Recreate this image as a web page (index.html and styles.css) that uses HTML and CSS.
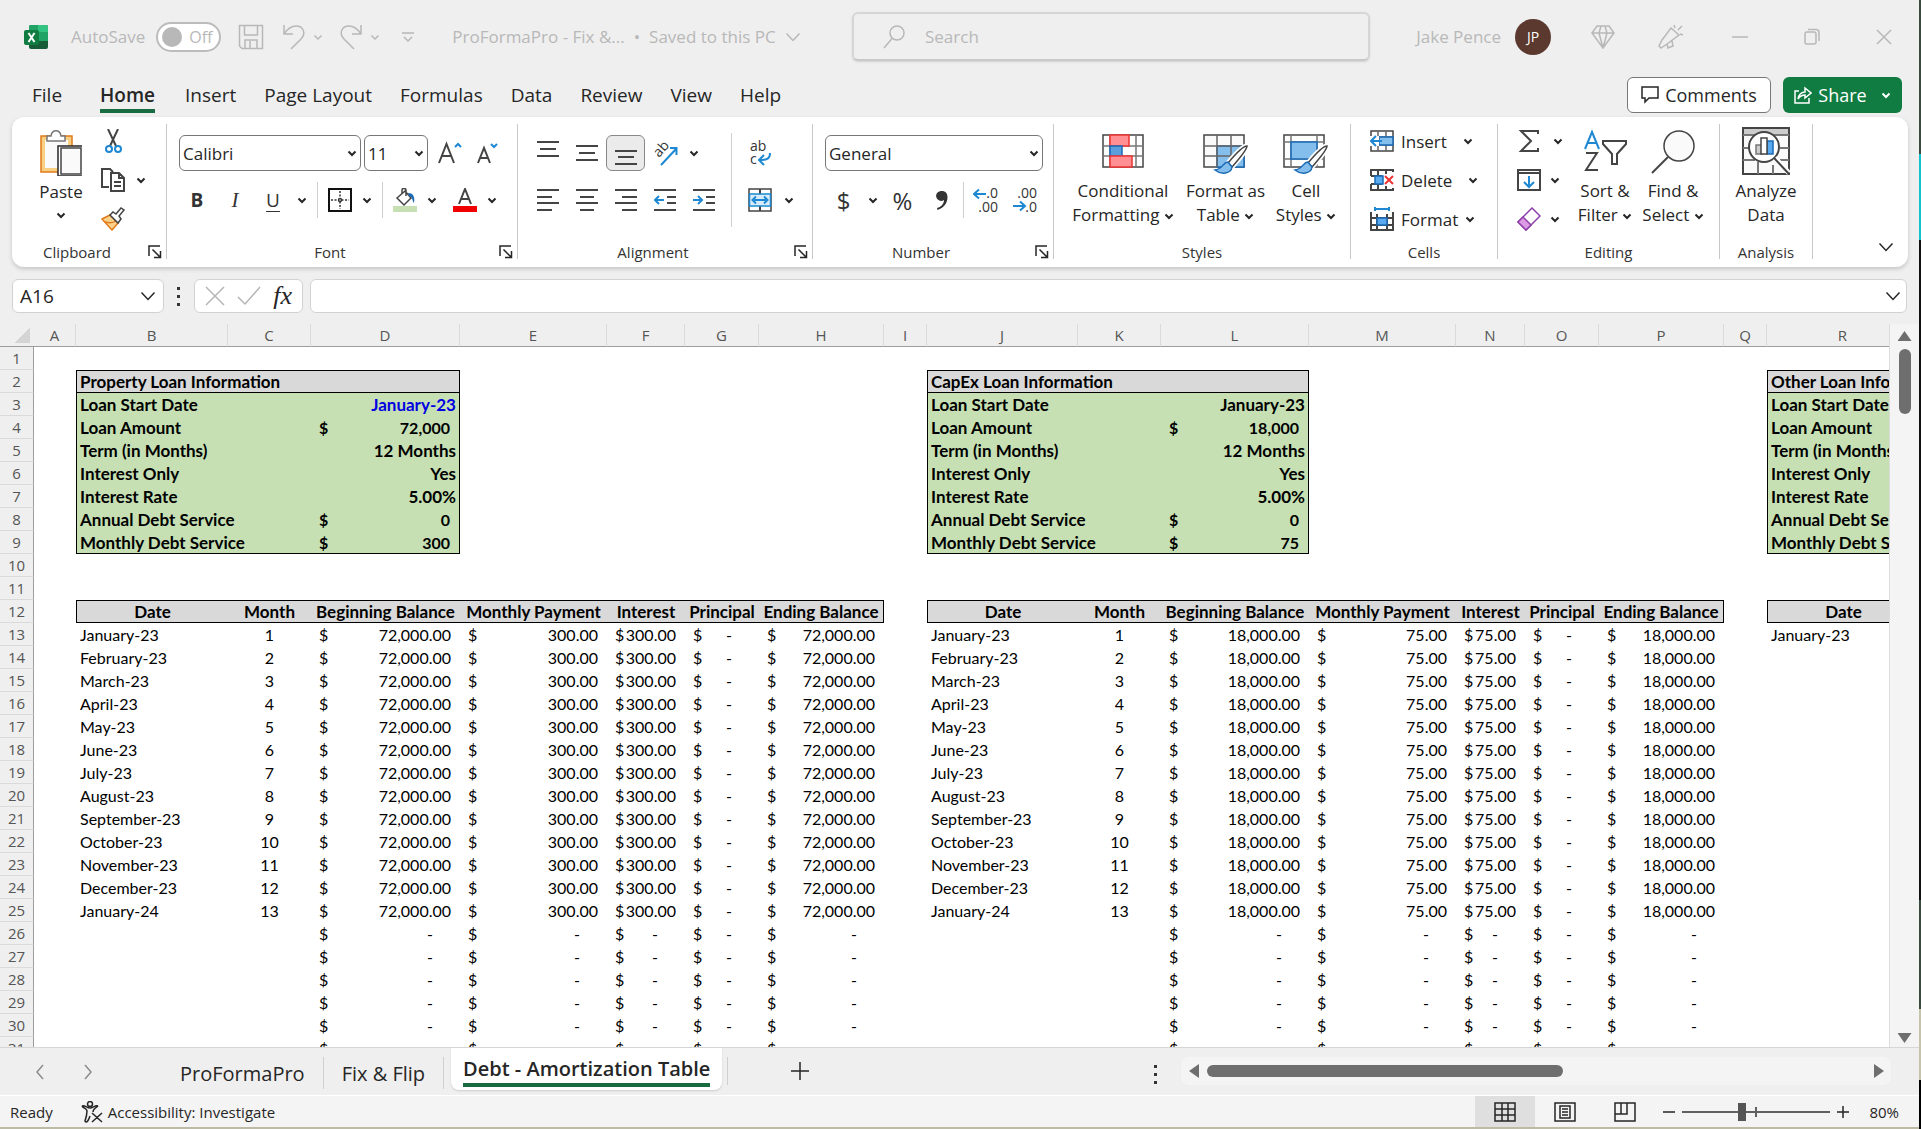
FILE: index.html
```
<!DOCTYPE html>
<html lang="en">
<head>
    <meta charset="UTF-8">
    <meta name="viewport" content="width=device-width, initial-scale=1.0">
    <title>ProFormaPro - Fix &amp; Flip</title>
    <link rel="stylesheet" href="styles.css">
</head>
<body>
    <!-- shared icons -->
    <svg class="defs" aria-hidden="true">
        <symbol id="chev" viewBox="0 0 10 10"><path d="M1.5 3.5 L5 7 L8.5 3.5"/></symbol>
        <symbol id="bigchev" viewBox="0 0 16 16"><path d="M1.5 4.5 L8 11.5 L14.5 4.5"/></symbol>
        <symbol id="launcher" viewBox="0 0 14 14"><path d="M1 11 V1 H12 M4.5 4.5 L12 12 M12.5 6 V12.5 H6"/></symbol>
    </svg>

    <div class="window">
        <header class="titlebar">
            <div class="title-left">
                <svg class="logo" width="24" height="24" viewBox="0 0 24 24">
                    <rect x="5" y="0" width="19" height="24" rx="2" fill="#185c37"/>
                    <path d="M5 2 a2 2 0 0 1 2-2 H14 V8 H5z" fill="#21a366"/>
                    <path d="M14 0 H22 a2 2 0 0 1 2 2 V7 H14z" fill="#33c481"/>
                    <rect x="5" y="7" width="9" height="9" fill="#107c41"/>
                    <rect x="14" y="7" width="10" height="9" fill="#21a366"/>
                    <rect x="0" y="5" width="15" height="15" rx="2" fill="#107c41"/>
                    <path d="M4.5 8 L10.5 17 M10.5 8 L4.5 17" stroke="#fff" stroke-width="2"/>
                </svg>
                <label class="autosave">AutoSave
                    <span class="toggle"><input type="checkbox"><span class="knob"></span><span>Off</span></span>
                </label>
                <button class="icon-btn save" aria-label="Save"><svg width="26" height="26" viewBox="0 0 26 26"><path d="M1.5 1.5 H24.5 V24.5 H4 L1.5 22z M6.5 1.5 V11 H19.5 V1.5 M7 24 V16 H19 V24 M12 17 V24"/></svg></button>
                <button class="icon-btn undo" aria-label="Undo"><svg width="24" height="26" viewBox="0 0 24 26"><path d="M2 1 V10 H11 M2 10 C6 4 9 2 14 2 C22 2 24 10 19 15 L9 25"/></svg></button>
                <button class="icon-btn mini" aria-label="Undo list"><svg width="10" height="10"><use href="#chev"/></svg></button>
                <button class="icon-btn redo" aria-label="Redo"><svg width="24" height="26" viewBox="0 0 24 26"><path d="M22 1 V10 H13 M22 10 C18 4 15 2 10 2 C2 2 0 10 5 15 L15 25"/></svg></button>
                <button class="icon-btn mini" aria-label="Redo list"><svg width="10" height="10"><use href="#chev"/></svg></button>
                <button class="icon-btn custom" aria-label="Customize toolbar"><svg width="12" height="12" viewBox="0 0 12 12"><path d="M0 2 H12 M2 6 L6 10 L10 6"/></svg></button>
                <div class="doc-title"><span>ProFormaPro - Fix &amp;...</span><span>•</span><span>Saved to this PC</span><svg width="16" height="16"><use href="#bigchev"/></svg></div>
            </div>
            <label class="search">
                <svg width="22" height="24" viewBox="0 0 22 24"><circle cx="14" cy="8" r="7"/><path d="M9 13.5 L1 23"/></svg>
                <input type="text" placeholder="Search" aria-label="Search">
            </label>
            <div class="title-right">
                <span>Jake Pence</span>
                <span class="avatar">JP</span>
                <button class="icon-btn gem" aria-label="Premium"><svg width="24" height="24" viewBox="0 0 24 24"><path d="M6 1 H18 L23 8 L12 23 L1 8z M1 8 H23 M8 8 L12 23 L16 8 L14 1 M8 8 L10 1"/></svg></button>
                <button class="icon-btn pen" aria-label="What's new"><svg width="26" height="26" viewBox="0 0 26 26"><path d="M4 16 L13 4 L21 11 L9 20 L3 24 L1 22z M9 20 L10 24 L15 22 L14 17 M16 1 L17 4 M24 2 L20 6 M22 10 L25 11"/></svg></button>
                <button class="icon-btn win" aria-label="Minimize"><svg width="16" height="18" viewBox="0 0 16 18"><path d="M0 9 H16"/></svg></button>
                <button class="icon-btn win" aria-label="Restore"><svg width="16" height="18" viewBox="0 0 16 18"><rect x="1" y="4" width="11" height="12" rx="2"/><path d="M4 1.5 H12 a3 3 0 0 1 3 3 V13"/></svg></button>
                <button class="icon-btn win" aria-label="Close"><svg width="16" height="18" viewBox="0 0 16 18"><path d="M1 2 L15 16 M15 2 L1 16"/></svg></button>
            </div>
        </header>

        <nav class="menu">
            <a href="#">File</a>
            <a href="#" class="active">Home</a>
            <a href="#">Insert</a>
            <a href="#">Page Layout</a>
            <a href="#">Formulas</a>
            <a href="#">Data</a>
            <a href="#">Review</a>
            <a href="#">View</a>
            <a href="#">Help</a>
            <button class="comments"><svg width="18" height="18" viewBox="0 0 18 18"><path d="M1 1 H17 V12 H8 L4 16 V12 H1z"/></svg>Comments</button>
            <button class="share"><svg width="18" height="18" viewBox="0 0 18 18"><path d="M5 5 H1 V17 H15 V12 M4 13 C5 8 8 6 11 6 V2 L17 7 L11 12 V9 C8 9 6 10 4 13z"/></svg>Share<svg width="10" height="10"><use href="#chev"/></svg></button>
        </nav>

        <section class="ribbon">
            <div class="group clipboard">
                <div class="body">
                    <button class="big paste">
                        <svg width="42" height="46" viewBox="0 0 42 46">
                            <rect x="3" y="8" width="27" height="32" fill="#fafafa" stroke="#f8cf83" stroke-width="4"/>
                            <rect x="1" y="6" width="31" height="36" fill="none" stroke="#e07b1a" stroke-width="1.5"/>
                            <path d="M7 11 V6 H11 C12 -1 20 -1 21 6 H25 V11z" fill="#fff" stroke="#777" stroke-width="1.5"/>
                            <rect x="18" y="16" width="25" height="30" fill="#fff"/>
                            <rect x="21" y="18" width="20" height="26" fill="#fafafa" stroke="#444" stroke-width="1.5"/>
                        </svg>
                        <span>Paste</span>
                        <svg class="c" width="10" height="10"><use href="#chev"/></svg>
                    </button>
                    <div class="stack">
                        <button class="row-btn" aria-label="Cut"><svg width="24" height="24" viewBox="0 0 24 24"><path class="k" d="M7 0 L15 17 M17 0 L9 17"/><circle class="b" cx="8" cy="20" r="3"/><circle class="b" cx="17" cy="20" r="3"/></svg></button>
                        <button class="row-btn" aria-label="Copy"><svg width="24" height="24" viewBox="0 0 24 24"><path class="k" d="M8 19 H1 V1 H9 L12 4 M10 5 H18 L23 10 V23 H10z M18 5 V10 H23 M13 14 H20 M13 18 H20"/></svg><svg class="c" width="10" height="10"><use href="#chev"/></svg></button>
                        <button class="row-btn" aria-label="Format Painter"><svg width="24" height="24" viewBox="0 0 24 24"><path d="M1 12 L9 8 L17 16 L11 23z" fill="#fbd28b" stroke="#e07b1a" stroke-width="1.5"/><path d="M4 15 C8 16 12 16 15 14" fill="none" stroke="#e07b1a"/><path d="M9 8 L12 5 L15 7 L20 1 L23 3 L18 9 L20 12 L17 16z" fill="#fff" stroke="#444" stroke-width="1.5"/></svg></button>
                    </div>
                </div>
                <div class="caption"><span>Clipboard</span><svg width="14" height="14"><use href="#launcher"/></svg></div>
            </div>

            <div class="group font">
                <div class="rows">
                    <div class="tools">
                        <span class="combo face"><select aria-label="Font"><option>Calibri</option></select><svg class="c" width="10" height="10"><use href="#chev"/></svg></span>
                        <span class="combo size"><select aria-label="Font size"><option>11</option></select><svg class="c" width="10" height="10"><use href="#chev"/></svg></span>
                        <button class="tool" aria-label="Increase font size"><svg width="24" height="24" viewBox="0 0 24 24"><path class="k" d="M1 22 L8.5 3 L16 22 M4 15 H13"/><path class="b" d="M17 6 L20 3 L23 6"/></svg></button>
                        <button class="tool" aria-label="Decrease font size"><svg width="24" height="24" viewBox="0 0 24 24"><path class="k" d="M2 22 L8 7 L14 22 M4 17 H12"/><path class="b" d="M15 3 L18 6 L21 3"/></svg></button>
                    </div>
                    <div class="tools">
                        <button class="tool bold">B</button>
                        <button class="tool italic">I</button>
                        <button class="tool underline">U</button>
                        <button class="drop" aria-label="Underline style"><svg class="c" width="10" height="10"><use href="#chev"/></svg></button>
                        <i class="vsep"></i>
                        <button class="tool split" aria-label="Borders"><svg width="24" height="24" viewBox="0 0 24 24"><rect x="1" y="1" width="22" height="22" fill="none" stroke="#111" stroke-width="2"/><path d="M12 3 V21 M3 12 H21" stroke="#333" stroke-width="1.5" stroke-dasharray="2 1.5"/><circle cx="12" cy="12" r="1.5" fill="#fff" stroke="#333"/></svg></button>
                        <button class="drop" aria-label="Border list"><svg class="c" width="10" height="10"><use href="#chev"/></svg></button>
                        <i class="vsep"></i>
                        <button class="tool split" aria-label="Fill color"><svg width="24" height="24" viewBox="0 0 24 24"><path d="M4 10 L12 3 L18 10 L11 17z M9 6 V2 C9 0 13 0 13 2 V8" stroke="#444" stroke-width="1.5"/><path d="M15 5 C21 5 22 10 21 15 C19 13 20 9 16 8z" fill="#1a6ab5" stroke="none"/><path d="M0 18 H24 V24 H0z" fill="#c6e0b4" stroke="none"/></svg></button>
                        <button class="drop" aria-label="Fill color list"><svg class="c" width="10" height="10"><use href="#chev"/></svg></button>
                        <button class="tool split spaced" aria-label="Font color"><svg width="24" height="24" viewBox="0 0 24 24"><path class="k" d="M6 16 L12 1 L18 16 M8 11 H16"/><path d="M0 18 H24 V24 H0z" fill="#f00000" stroke="none"/></svg></button>
                        <button class="drop" aria-label="Font color list"><svg class="c" width="10" height="10"><use href="#chev"/></svg></button>
                    </div>
                </div>
                <div class="caption"><span>Font</span><svg width="14" height="14"><use href="#launcher"/></svg></div>
            </div>

            <div class="group align">
                <div class="body">
                    <div class="rows">
                        <div class="tools">
                            <button class="tool" aria-label="Top align"><svg width="22" height="24" viewBox="0 0 22 24"><path class="k" d="M0 1 H22 M3 8 H19 M0 15 H22"/></svg></button>
                            <button class="tool" aria-label="Middle align"><svg width="22" height="24" viewBox="0 0 22 24"><path class="k" d="M0 5 H22 M3 12 H19 M0 19 H22"/></svg></button>
                            <button class="tool pressed" aria-label="Bottom align"><svg width="22" height="24" viewBox="0 0 22 24"><path class="k" d="M0 10 H22 M3 16 H19 M0 23 H22"/></svg></button>
                            <button class="tool" aria-label="Orientation"><svg width="26" height="26" viewBox="0 0 26 26"><text x="0" y="0" transform="translate(7 18) rotate(-48)" class="glyph">ab</text><path class="b" d="M9 25 L24 9 M18 8 H24.5 V15"/></svg></button>
                            <button class="drop" aria-label="Orientation list"><svg class="c" width="10" height="10"><use href="#chev"/></svg></button>
                        </div>
                        <div class="tools">
                            <button class="tool" aria-label="Align left"><svg width="22" height="24" viewBox="0 0 22 24"><path class="k" d="M0 2 H22 M0 9 H15 M0 15 H22 M0 22 H15"/></svg></button>
                            <button class="tool" aria-label="Center"><svg width="22" height="24" viewBox="0 0 22 24"><path class="k" d="M0 2 H22 M4 9 H18 M0 15 H22 M4 22 H18"/></svg></button>
                            <button class="tool" aria-label="Align right"><svg width="22" height="24" viewBox="0 0 22 24"><path class="k" d="M0 2 H22 M7 9 H22 M0 15 H22 M7 22 H22"/></svg></button>
                            <button class="tool" aria-label="Decrease indent"><svg width="22" height="24" viewBox="0 0 22 24"><path class="k" d="M0 2 H22 M13 9 H22 M13 15 H22 M0 22 H22"/><path class="b" d="M1 12 H10 M5 8 L1 12 L5 16"/></svg></button>
                            <button class="tool" aria-label="Increase indent"><svg width="22" height="24" viewBox="0 0 22 24"><path class="k" d="M0 2 H22 M13 9 H22 M13 15 H22 M0 22 H22"/><path class="b" d="M0 12 H9 M5 8 L9 12 L5 16"/></svg></button>
                        </div>
                    </div>
                    <i class="vsep tall"></i>
                    <div class="rows wrap">
                        <div class="tools">
                            <button class="tool" aria-label="Wrap text"><svg width="24" height="26" viewBox="0 0 24 26"><text x="2" y="11" class="glyph">ab</text><text x="2" y="24" class="glyph">c</text><path class="b" d="M22 13 C22 18 20 20 12 20 M16 15 L11 20 L16 25"/></svg></button>
                        </div>
                        <div class="tools">
                            <button class="tool" aria-label="Merge"><svg width="24" height="24" viewBox="0 0 24 24"><rect x="1" y="1" width="22" height="22" fill="#fff" stroke="#444" stroke-width="1.5"/><path class="k" d="M12 1 V6 M12 18 V23"/><rect x="1.5" y="6" width="21" height="12" fill="#d9ecfa" stroke="#1e88d2" stroke-width="1.5"/><path class="b" d="M4 12 H20 M8 8.5 L4.5 12 L8 15.5 M16 8.5 L19.5 12 L16 15.5"/></svg></button>
                            <button class="drop" aria-label="Merge list"><svg class="c" width="10" height="10"><use href="#chev"/></svg></button>
                        </div>
                    </div>
                </div>
                <div class="caption"><span>Alignment</span><svg width="14" height="14"><use href="#launcher"/></svg></div>
            </div>

            <div class="group number">
                <div class="rows">
                    <div class="tools">
                        <span class="combo format"><select aria-label="Number format"><option>General</option></select><svg class="c" width="10" height="10"><use href="#chev"/></svg></span>
                    </div>
                    <div class="tools">
                        <button class="tool sign">$</button>
                        <button class="drop" aria-label="Currency list"><svg class="c" width="10" height="10"><use href="#chev"/></svg></button>
                        <button class="tool sign">%</button>
                        <button class="tool" aria-label="Comma style"><svg width="12" height="22" viewBox="0 0 12 22"><path d="M6 2 a5 5 0 1 0 2 9 C8 15 5 18 1 19 L1.5 21 C8 19 11.5 14 11.5 8 C11.5 4 9 2 6 2z" fill="#333" stroke="none"/></svg></button>
                        <i class="vsep tight"></i>
                        <button class="tool" aria-label="Increase decimal"><svg width="26" height="26" viewBox="0 0 26 26"><text x="25" y="11" class="glyph end">.0</text><text x="25" y="25" class="glyph end">.00</text><path class="b" d="M1 7 H13 M6 2.5 L1 7 L6 11.5"/></svg></button>
                        <button class="tool" aria-label="Decrease decimal"><svg width="26" height="26" viewBox="0 0 26 26"><text x="25" y="11" class="glyph end">.00</text><text x="25" y="25" class="glyph end">.0</text><path class="b" d="M1 19 H13 M8 14.5 L13 19 L8 23.5"/></svg></button>
                    </div>
                </div>
                <div class="caption"><span>Number</span><svg width="14" height="14"><use href="#launcher"/></svg></div>
            </div>

            <div class="group styles">
                <div class="body">
                    <button class="big cond">
                        <svg width="42" height="48" viewBox="0 0 42 48"><rect x="1" y="8" width="40" height="32" fill="#fff" stroke="#444" stroke-width="1.5"/><path d="M1 19 H41 M1 29 H41 M34 8 V40 M8 8 V40" stroke="#777" stroke-width="1.5"/><rect x="8" y="8" width="19" height="11" fill="#ff8f92" stroke="#e33" stroke-width="1.5"/><rect x="8" y="19" width="12" height="10" fill="#5a9fdc" stroke="#1a6ab5"/><rect x="8" y="29" width="22" height="11" fill="#ff8f92" stroke="#e33" stroke-width="1.5"/></svg>
                        <span>Conditional</span><span>Formatting <svg class="c" width="10" height="10"><use href="#chev"/></svg></span>
                    </button>
                    <button class="big fmt">
                        <svg width="46" height="48" viewBox="0 0 46 48"><rect x="1" y="8" width="40" height="32" fill="#fafafa" stroke="#444" stroke-width="1.5"/><rect x="14" y="19" width="27" height="21" fill="#83beec" stroke="#1a6ab5"/><path d="M1 19 H41 M1 29 H41 M14 8 V40 M28 8 V40" stroke="#666" stroke-width="1.5"/><path d="M44 19 C40 19 30 30 25 36 L29 40 C36 32 44 23 44 19z" fill="#fff" stroke="#fff" stroke-width="5"/><path d="M44 19 C40 19 30 30 25 36 L29 40 C36 32 44 23 44 19z" fill="#fff" stroke="#444" stroke-width="1.5"/><path d="M25 35 C20 35 20 42 12 43 C18 48 28 47 29 40z" fill="#83beec" stroke="#1a6ab5" stroke-width="1.5"/></svg>
                        <span>Format as</span><span>Table <svg class="c" width="10" height="10"><use href="#chev"/></svg></span>
                    </button>
                    <button class="big cell">
                        <svg width="46" height="48" viewBox="0 0 46 48"><rect x="1" y="8" width="40" height="32" fill="#fff" stroke="#444" stroke-width="1.5"/><path d="M1 15 H41 M1 32 H41 M8 8 V40 M34 8 V40" stroke="#777" stroke-width="1.5"/><rect x="8" y="15" width="26" height="17" fill="#83beec" stroke="#1a6ab5"/><path d="M44 19 C40 19 30 30 25 36 L29 40 C36 32 44 23 44 19z" fill="#fff" stroke="#fff" stroke-width="5"/><path d="M44 19 C40 19 30 30 25 36 L29 40 C36 32 44 23 44 19z" fill="#fff" stroke="#444" stroke-width="1.5"/><path d="M25 35 C20 35 20 42 12 43 C18 48 28 47 29 40z" fill="#83beec" stroke="#1a6ab5" stroke-width="1.5"/></svg>
                        <span>Cell</span><span>Styles <svg class="c" width="10" height="10"><use href="#chev"/></svg></span>
                    </button>
                </div>
                <div class="caption"><span>Styles</span></div>
            </div>

            <div class="group cells">
                <div class="body">
                    <div class="stack">
                        <button class="row-btn"><svg width="24" height="22" viewBox="0 0 24 22"><rect x="1" y="1" width="22" height="20" fill="#fff" stroke="#444" stroke-width="1.5"/><path d="M1 7 H23 M1 15 H23 M8 1 V21 M16 1 V21" stroke="#666"/><rect x="9" y="7" width="14" height="8" fill="#83beec" stroke="#1a6ab5"/><path d="M0 6 H9 V16 H0z" fill="#fff" stroke="none"/><path class="b" d="M1 11 H12 M6 6 L1 11 L6 16"/></svg>Insert<svg class="c far" width="10" height="10"><use href="#chev"/></svg></button>
                        <button class="row-btn"><svg width="24" height="22" viewBox="0 0 24 22"><path class="k" d="M1 7 V1 H23 V3 M1 7 H12 M1 15 V21 H23 V19 M1 15 H12 M8 1 V7 M8 15 V21 M16 1 V5 M16 17 V21"/><rect x="5" y="7" width="8" height="8" fill="#5aaaf0" stroke="#1a6ab5"/><path d="M15 7 L23 15 M23 7 L15 15" stroke="#e33" stroke-width="2"/></svg>Delete<svg class="c far" width="10" height="10"><use href="#chev"/></svg></button>
                        <button class="row-btn"><svg width="24" height="24" viewBox="0 0 24 24"><path class="k" d="M1 5 V23 H23 V5 M1 11 H23 M1 18 H23 M7 7 V23 M17 7 V23"/><rect x="7" y="11" width="10" height="7" fill="#5aaaf0" stroke="#1a6ab5"/><path class="b" d="M5 2 H19 M5 0 V4 M19 0 V4"/></svg>Format<svg class="c" width="10" height="10"><use href="#chev"/></svg></button>
                    </div>
                </div>
                <div class="caption"><span>Cells</span></div>
            </div>

            <div class="group editing">
                <div class="body">
                    <div class="stack">
                        <button class="row-btn" aria-label="AutoSum"><svg width="24" height="24" viewBox="0 0 24 24"><path class="k" d="M21 5 V2 H4 L14 12 L4 22 H21 V19"/></svg><svg class="c far" width="10" height="10"><use href="#chev"/></svg></button>
                        <button class="row-btn" aria-label="Fill"><svg width="24" height="22" viewBox="0 0 24 22"><rect class="k" x="1" y="1" width="22" height="20"/><path class="k" d="M1 4 H23"/><path class="b" d="M12 7 V18 M7 13 L12 18 L17 13"/></svg><svg class="c" width="10" height="10"><use href="#chev"/></svg></button>
                        <button class="row-btn" aria-label="Clear"><svg width="24" height="24" viewBox="0 0 24 24"><path d="M1 15 L15 1 L23 9 L9 23z" fill="#fff" stroke="#8e3fa8" stroke-width="1.5"/><path d="M1 15 L6 10 L14 18 L9 23z" fill="#dd9be6" stroke="#8e3fa8" stroke-width="1.5"/></svg><svg class="c" width="10" height="10"><use href="#chev"/></svg></button>
                    </div>
                    <button class="big sort">
                        <svg width="44" height="48" viewBox="0 0 44 48"><path class="b" d="M2 22 L9 5 L16 22 M4 16 H14"/><path class="k" d="M3 26 H14 L3 43 H15 M20 14 H43 V17 L34 27 V37 H29 V27 L20 17z"/></svg>
                        <span>Sort &amp;</span><span>Filter <svg class="c" width="10" height="10"><use href="#chev"/></svg></span>
                    </button>
                    <button class="big find">
                        <svg width="44" height="48" viewBox="0 0 44 48"><circle cx="28" cy="19" r="15" fill="#fafafa" stroke="#444" stroke-width="1.5"/><path class="k" d="M17 30 L1 46"/></svg>
                        <span>Find &amp;</span><span>Select <svg class="c" width="10" height="10"><use href="#chev"/></svg></span>
                    </button>
                </div>
                <div class="caption"><span>Editing</span></div>
            </div>

            <div class="group analysis">
                <div class="body">
                    <button class="big">
                        <svg width="48" height="48" viewBox="0 0 48 48"><rect x="1" y="1" width="46" height="46" fill="#fafafa" stroke="#444" stroke-width="2"/><rect x="2" y="2" width="44" height="5" fill="#ccc" stroke="none"/><path d="M1 8 H47 M1 21 H8 M38 21 H47 M1 33 H13 M38 33 H47 M16 35 V47 M31 38 V47" stroke="#777" stroke-width="2"/><circle cx="22" cy="20" r="15" fill="#fff" stroke="#444" stroke-width="2"/><path d="M33 31 L47 46" stroke="#fff" stroke-width="5"/><path d="M32 31 L47 47" stroke="#444" stroke-width="2"/><rect x="14" y="18" width="6" height="9" fill="#ccc" stroke="#777"/><rect x="25" y="14" width="6" height="13" fill="#5aaaf0" stroke="#1a6ab5"/><rect x="19" y="11" width="6" height="16" fill="#fff" stroke="#444" stroke-width="1.5"/></svg>
                        <span>Analyze</span><span>Data</span>
                    </button>
                </div>
                <div class="caption"><span>Analysis</span></div>
            </div>
            <button class="collapse" aria-label="Collapse ribbon"><svg width="16" height="16"><use href="#bigchev"/></svg></button>
        </section>

        <section class="formula-bar">
            <div class="name-box"><input type="text" value="A16" aria-label="Name box"><button aria-label="Names"><svg width="16" height="16"><use href="#bigchev"/></svg></button></div>
            <div class="dots"></div>
            <div class="fx-box">
                <button aria-label="Cancel"><svg width="20" height="20" viewBox="0 0 20 20"><path d="M1 1 L19 19 M19 1 L1 19"/></svg></button>
                <button aria-label="Enter"><svg width="24" height="20" viewBox="0 0 24 20"><path d="M1 11 L8 18 L23 1"/></svg></button>
                <button class="fx">fx</button>
            </div>
            <div class="formula"><input type="text" aria-label="Formula"><button aria-label="Expand"><svg width="16" height="16"><use href="#bigchev"/></svg></button></div>
        </section>

        <main class="sheet-area">
            <div class="sheet">
                <table id="grid"></table>
            </div>
            <div class="vscroll"><span class="arrow up"></span><span class="thumb"></span><span class="arrow down"></span></div>
        </main>

        <section class="tabs-bar">
            <div class="tab-nav">
                <button aria-label="Previous sheet"><svg width="10" height="16" viewBox="0 0 10 16"><path d="M8 1 L2 8 L8 15"/></svg></button>
                <button aria-label="Next sheet"><svg width="10" height="16" viewBox="0 0 10 16"><path d="M2 1 L8 8 L2 15"/></svg></button>
            </div>
            <a href="#" class="tab">ProFormaPro</a>
            <a href="#" class="tab">Fix &amp; Flip</a>
            <a href="#" class="tab active"><span>Debt - Amortization Table</span></a>
            <button class="add" aria-label="New sheet"><svg width="18" height="18" viewBox="0 0 18 18"><path d="M9 0 V18 M0 9 H18"/></svg></button>
            <div class="dots"></div>
            <div class="hscroll"><span class="arrow left"></span><span class="track"><span class="thumb"></span></span><span class="arrow right"></span></div>
        </section>

        <footer class="status">
            <span>Ready</span>
            <button class="access"><svg width="24" height="22" viewBox="0 0 24 22"><circle cx="9" cy="3" r="2.5"/><path d="M1 5 C3 8 6 7 6 10 C6 14 5 17 4 20 C6 23 8 18 9 15 M17 5 C14 8 12 7 12 11 M1 5 C4 4 6 7 9 7 C12 7 14 4 17 5 M11 12 L21 21 M21 12 L11 21"/></svg>Accessibility: Investigate</button>
            <div class="views">
                <button class="on" aria-label="Normal"><svg width="22" height="20" viewBox="0 0 22 20"><path d="M1 1 H21 V19 H1z M1 7 H21 M1 13 H21 M8 1 V19 M14 1 V19"/></svg></button>
                <button aria-label="Page layout"><svg width="22" height="20" viewBox="0 0 22 20"><path d="M1 1 H21 V19 H1z M6 4 H16 V16 H6z M8 7 H14 M8 10 H14 M8 13 H14"/></svg></button>
                <button aria-label="Page break"><svg width="22" height="20" viewBox="0 0 22 20"><path d="M1 1 H21 V19 H1z M1 12 H13 V1 M7 1 V12"/></svg></button>
            </div>
            <div class="zoom">
                <button aria-label="Zoom out"><svg width="12" height="12" viewBox="0 0 12 12"><path d="M0 6 H12"/></svg></button>
                <input type="range" min="0" max="200" value="80" aria-label="Zoom">
                <button aria-label="Zoom in"><svg width="12" height="12" viewBox="0 0 12 12"><path d="M0 6 H12 M6 0 V12"/></svg></button>
                <span>80%</span>
            </div>
        </footer>
    </div>
    <div class="desktop-edge"></div>
    <script src="script.js"></script>
</body>
</html>
```
FILE: styles.css
```
* {
    box-sizing: border-box;
}
body {
    margin: 0;
    height: 100vh;
    display: flex;
    overflow: hidden;
    font-family: "Open Sans", "Noto Sans", sans-serif;
    font-size: 17px;
    color: #262626;
    background-color: #efefef;
}
button, input, select {
    font: inherit;
    color: inherit;
    background: none;
    border: none;
    padding: 0;
    margin: 0;
    outline: none;
}
button {
    display: flex;
    align-items: center;
    justify-content: center;
    white-space: nowrap;
}
a {
    color: inherit;
    text-decoration: none;
}
svg {
    flex: none;
    fill: none;
    stroke: #262626;
    stroke-width: 1.5;
}
.defs {
    position: absolute;
    width: 0;
    height: 0;
}
.c {
    stroke-width: 2;
}
.k {
    fill: none;
    stroke: #444;
    stroke-width: 2;
}
.b {
    fill: none;
    stroke: #1e88d2;
    stroke-width: 2;
}
.glyph {
    font-size: 14px;
    fill: #333;
    stroke: none;
}
.end {
    text-anchor: end;
}
.window {
    flex: 1;
    min-width: 0;
    display: flex;
    flex-direction: column;
    border-bottom: 2px solid #bdbba6;
}
.desktop-edge {
    width: 2px;
    background: linear-gradient(#3a4a3f 154px, #12c3ce 154px, #12c3ce 240px, #111 240px, #111 900px, #3a4a3f 900px, #3a4a3f 1009px, #c6c3ac 1009px, #c6c3ac 1080px, #000 1080px);
}

/* title bar */
.titlebar {
    display: grid;
    grid-template-columns: 852fr 518fr 549fr;
    align-items: center;
    height: 73px;
    color: #b8b8b8;
}
.titlebar svg {
    stroke: #b8b8b8;
}
.titlebar .logo {
    stroke: none;
    margin-right: 23px;
}
.title-left {
    display: flex;
    align-items: center;
    padding-left: 24px;
    white-space: nowrap;
}
.autosave {
    display: flex;
    align-items: center;
    gap: 11px;
}
.toggle {
    display: flex;
    align-items: center;
    gap: 7px;
    width: 65px;
    height: 30px;
    padding-left: 4px;
    border: 2px solid #bcbcbc;
    border-radius: 15px;
    background-color: #fff;
    font-size: 16px;
}
.toggle input {
    position: absolute;
    opacity: 0;
}
.knob {
    width: 20px;
    height: 20px;
    border-radius: 50%;
    background-color: #b8b8b8;
}
.save {
    margin-left: 17px;
}
.undo {
    margin-left: 18px;
}
.mini {
    margin-left: 7px;
}
.redo {
    margin-left: 16px;
}
.custom {
    margin-left: 22px;
}
.doc-title {
    display: flex;
    align-items: center;
    gap: 9px;
    margin-left: 38px;
}
.search {
    display: flex;
    align-items: center;
    gap: 20px;
    height: 49px;
    padding-left: 29px;
    border: 2px solid #d6d6d6;
    border-bottom-color: #c8c8c8;
    border-radius: 6px;
    box-shadow: 0 1px 2px #d0d0d0;
}
.search input {
    flex: 1;
    min-width: 0;
}
.search input::placeholder {
    color: #b8b8b8;
}
.title-right {
    display: flex;
    align-items: center;
    justify-content: flex-end;
    padding-right: 27px;
    white-space: nowrap;
}
.avatar {
    width: 36px;
    height: 36px;
    margin-left: 14px;
    border-radius: 50%;
    background-color: #5c392e;
    color: #fff;
    font-size: 14px;
    line-height: 36px;
    text-align: center;
}
.gem {
    margin-left: 40px;
}
.pen {
    margin: 0 48px 0 43px;
}
.win + .win {
    margin-left: 56px;
}

/* menu */
.menu {
    display: flex;
    align-items: center;
    gap: 28px;
    height: 44px;
    padding: 0 17px 0 32px;
    font-size: 19px;
}
.menu a {
    height: 32px;
    line-height: 28px;
    margin-top: 4px;
}
.menu .active {
    margin-left: 10px;
    margin-right: 2px;
    font-weight: 600;
    border-bottom: 4px solid #196b41;
}
.comments, .share {
    height: 36px;
    border-radius: 6px;
    gap: 6px;
    font-size: 18px;
}
.comments {
    margin-left: auto;
    width: 144px;
    border: 1px solid #777;
    background-color: #fff;
}
.share {
    width: 119px;
    margin-left: -16px;
    background-color: #107c41;
    color: #fff;
}
.share svg {
    stroke: #fff;
}
.share svg:last-child {
    margin-left: 8px;
    stroke-width: 2;
}

/* ribbon */
.ribbon {
    display: flex;
    height: 150px;
    margin: 0 11px 0 12px;
    padding: 7px 0 8px;
    border-radius: 12px;
    background-color: #fff;
    box-shadow: 0 2px 4px #c4c4c4;
}
.group {
    display: flex;
    flex-direction: column;
    justify-content: space-between;
    border-right: 1px solid #c8c8c8;
}
.clipboard {
    width: 155px;
}
.font {
    width: 351px;
}
.align {
    width: 295px;
}
.number {
    width: 241px;
}
.styles {
    width: 297px;
}
.cells {
    width: 147px;
}
.editing {
    width: 222px;
}
.analysis {
    width: 93px;
}
.body {
    display: flex;
    align-items: flex-start;
}
.clipboard .body, .styles .body {
    padding-left: 10px;
}
.clipboard .body {
    padding-left: 11px;
}
.align .body {
    padding-left: 10px;
}
.cells .body, .editing .body {
    padding-left: 19px;
}
.font .rows, .number .rows {
    padding-left: 11px;
}
.rows {
    display: flex;
    flex-direction: column;
    gap: 11px;
    padding-top: 11px;
}
.tools {
    display: flex;
    align-items: center;
    height: 36px;
}
.tool {
    width: 39px;
    height: 36px;
    color: #333;
}
.font .tool {
    width: 38px;
}
.font .split {
    width: 34px;
}
.spaced {
    margin-left: 6px;
}
.drop {
    width: 20px;
    height: 36px;
}
.bold {
    font-weight: 700;
    font-size: 19px;
}
.italic {
    font-family: "Liberation Serif", serif;
    font-style: italic;
    font-size: 21px;
}
.underline {
    font-size: 19px;
    text-decoration: underline;
    text-underline-offset: 4px;
}
.sign {
    font-size: 24px;
}
.pressed {
    border: 1px solid #888;
    border-radius: 6px;
    background-color: #ebebeb;
}
.vsep {
    width: 1px;
    height: 36px;
    margin: 0 5px;
    background-color: #cfcfcf;
}
.tight {
    margin: 0 2px;
}
.tall {
    height: 94px;
    margin: 9px 8px 0 8px;
}
.combo {
    position: relative;
    display: flex;
    align-items: center;
    height: 36px;
    margin-right: 3px;
}
.combo select {
    appearance: none;
    width: 100%;
    height: 36px;
    padding-left: 3px;
    border: 1px solid #777;
    border-radius: 6px;
    font-size: 17px;
}
.combo svg {
    position: absolute;
    right: 4px;
    pointer-events: none;
}
.face {
    width: 182px;
    margin-left: 1px;
}
.size {
    width: 64px;
}
.format {
    width: 218px;
    margin-left: 1px;
}
.caption {
    display: flex;
    align-items: center;
    justify-content: center;
    height: 14px;
    font-size: 15px;
    line-height: 14px;
    color: #333;
}
.caption span {
    flex: 1;
    text-align: center;
}
.caption svg {
    margin: 0 4px 0 6px;
}
.big {
    flex-direction: column;
    line-height: 24px;
}
.big > svg:first-child {
    margin: 3px 0 4px;
}
.paste {
    width: 76px;
}
.paste > svg:first-child {
    margin-top: 6px;
}
.paste > svg.c {
    margin-top: 6px;
}
.cond {
    width: 118px;
}
.fmt {
    width: 87px;
}
.cell {
    width: 74px;
}
.sort {
    width: 68px;
    margin-left: 8px;
}
.find {
    width: 68px;
}
.analysis .big {
    width: 94px;
}
.stack {
    display: flex;
    flex-direction: column;
    gap: 15px;
    padding-top: 5px;
}
.row-btn {
    height: 24px;
    gap: 7px;
    justify-content: flex-start;
}
.clipboard .stack {
    padding-left: 2px;
}
.clipboard .row-btn {
    gap: 11px;
}
.editing .row-btn {
    gap: 9px;
}
.row-btn .far {
    margin-left: 9px;
}
.editing .row-btn .far {
    margin-left: 3px;
}
.collapse {
    margin-left: auto;
    align-self: flex-end;
    padding: 0 14px 4px 0;
}

/* formula bar */
.formula-bar {
    display: flex;
    height: 57px;
    padding: 12px 12px 11px 12px;
}
.name-box, .fx-box, .formula {
    display: flex;
    align-items: center;
    height: 34px;
    border: 1px solid #d2d2d2;
    border-radius: 6px;
    background-color: #fff;
}
.name-box {
    width: 152px;
    padding: 0 7px 0 7px;
    font-size: 19px;
}
.name-box input, .formula input {
    flex: 1;
    min-width: 0;
}
.dots {
    width: 3px;
    height: 19px;
    margin: 8px 14px 8px 13px;
    background: repeating-linear-gradient(#333 0 3px, transparent 3px 8px);
}
.fx-box {
    width: 109px;
    justify-content: space-around;
    padding: 0 4px;
}
.fx-box svg {
    stroke: #b5b5b5;
}
.fx {
    font-family: "Liberation Serif", serif;
    font-style: italic;
    font-size: 26px;
    line-height: 26px;
}
.formula {
    flex: 1;
    margin-left: 7px;
    padding-right: 5px;
}

/* grid */
.sheet-area {
    flex: 1;
    min-height: 0;
    display: flex;
    border-bottom: 1px solid #d6d6d6;
}
.sheet {
    flex: 1;
    min-width: 0;
    overflow: hidden;
    background: linear-gradient(#efefef 23px, #fff 23px);
}
#grid {
    table-layout: fixed;
    width: 1919px;
    border-collapse: separate;
    border-spacing: 0;
    font-family: Lato, "Liberation Sans", sans-serif;
    font-size: 16px;
    color: #000;
}
#grid th, #grid td {
    height: 23px;
    padding: 0 4px;
    line-height: 21px;
    white-space: nowrap;
}
#grid thead th, #grid th.row {
    font-family: "Open Sans", "Noto Sans", sans-serif;
    font-size: 15px;
    font-weight: 400;
    color: #555;
    background-color: #efefef;
}
#grid thead th {
    border-bottom: 1px solid #9d9d9d;
    border-right: 1px solid #dadada;
}
#grid th.row {
    padding: 0;
    border-right: 1px solid #9d9d9d;
    border-bottom: 1px solid #dadada;
}
#grid thead th.corner {
    padding: 0 4px 3px 14px;
    vertical-align: bottom;
    border-right: none;
}
.corner i {
    display: block;
    height: 15px;
    background: linear-gradient(135deg, transparent 50%, #d4d4d4 50%);
}
#grid .center {
    text-align: center;
}
#grid .num {
    text-align: right;
    padding-right: 3px;
}
.money div {
    display: flex;
    justify-content: space-between;
    padding: 0 5px 0 4px;
}
.money .dash {
    padding-right: 23px;
}
#grid .head {
    font-size: 17px;
    font-weight: 700;
    padding: 0;
    background-color: #d9d9d9;
    border-top: 1px solid #000;
    border-bottom: 1px solid #000;
}
#grid .title {
    padding-left: 3px;
    text-align: left;
}
#grid .info {
    font-size: 17px;
    font-weight: 700;
    background-color: #c6e0b4;
}
#grid .info.money {
    font-size: 16px;
}
#grid .first {
    border-left: 1px solid #000;
}
#grid .info.first {
    padding-left: 3px;
}
#grid .last {
    border-right: 1px solid #000;
}
#grid .bottom {
    border-bottom: 1px solid #000;
}
#grid .input {
    color: #0000e0;
}
.vscroll {
    display: flex;
    flex-direction: column;
    align-items: center;
    width: 30px;
    padding: 7px 0 4px 0;
    border-left: 1px solid #dcdcdc;
    background-color: #f4f4f4;
}
.vscroll .thumb {
    width: 12px;
    height: 65px;
    margin: 8px 0 auto;
    border-radius: 6px;
    background-color: #6e6e6e;
}
.arrow {
    width: 14px;
    height: 10px;
    background-color: #6e6e6e;
}
.up {
    clip-path: polygon(50% 0, 100% 100%, 0 100%);
}
.down {
    clip-path: polygon(0 0, 100% 0, 50% 100%);
}
.left, .right {
    width: 10px;
    height: 14px;
}
.left {
    clip-path: polygon(100% 0, 100% 100%, 0 50%);
}
.right {
    clip-path: polygon(0 0, 100% 50%, 0 100%);
}

/* sheet tabs */
.tabs-bar {
    display: flex;
    height: 47px;
    font-size: 20px;
}
.tab-nav {
    display: flex;
    gap: 38px;
    padding-left: 35px;
    margin-right: 69px;
}
.tab-nav svg {
    stroke: #8c8c8c;
}
.tab {
    height: 32px;
    margin-top: 9px;
    padding: 5px 18px 0;
    line-height: 24px;
    border-right: 1px solid #cfcfcf;
    white-space: nowrap;
}
.tabs-bar .active {
    height: 42px;
    margin: 0 5px 0 7px;
    padding: 6px 12px 0;
    border: none;
    border-radius: 0 0 8px 8px;
    background-color: #fff;
    font-weight: 600;
    box-shadow: 0 1px 2px #ccc;
}
.active span {
    display: block;
    height: 33px;
    line-height: 30px;
    border-bottom: 4px solid #196b41;
}
.add {
    height: 28px;
    margin-top: 9px;
    padding-left: 63px;
    border-left: 1px solid #cfcfcf;
}
.tabs-bar .dots {
    margin: 17px 24px 0 auto;
}
.hscroll {
    display: flex;
    align-items: center;
    width: 710px;
    height: 28px;
    margin: 9px 28px 0 0;
    padding: 0 7px 0 8px;
    border-radius: 8px;
    background-color: #f4f4f4;
}
.track {
    flex: 1;
    padding: 0 8px;
}
.track .thumb {
    display: block;
    width: 54%;
    height: 12px;
    border-radius: 6px;
    background-color: #6e6e6e;
}

/* status bar */
.status {
    display: flex;
    align-items: center;
    height: 32px;
    padding: 0 20px 0 10px;
    border-top: 1px solid #fff;
    background-color: #f4f4f4;
    font-size: 15px;
}
.access {
    gap: 3px;
    margin-left: 28px;
}
.views {
    display: flex;
    height: 100%;
    margin-left: auto;
}
.views button {
    width: 60px;
}
.views .on {
    background-color: #dfdfdf;
}
.zoom {
    display: flex;
    align-items: center;
    gap: 7px;
    margin-left: 8px;
}
.zoom input {
    appearance: none;
    width: 148px;
    height: 18px;
    background: linear-gradient(#606060, #606060) center / 2px 10px no-repeat, linear-gradient(#606060, #606060) center / 100% 2px no-repeat;
}
.zoom input::-webkit-slider-thumb {
    appearance: none;
    width: 8px;
    height: 18px;
    background-color: #555;
}
.zoom span {
    margin-left: 13px;
}
```
FILE: script.js
```
const months = ['January-23', 'February-23', 'March-23', 'April-23', 'May-23', 'June-23', 'July-23',
    'August-23', 'September-23', 'October-23', 'November-23', 'December-23', 'January-24'];
const widths = [34, 42, 152, 83, 149, 147, 78, 74, 125, 43, 151, 83, 148, 147, 69, 74, 125, 43, 152];
const headings = ['Date', 'Month', 'Beginning Balance', 'Monthly Payment', 'Interest', 'Principal', 'Ending Balance'];
const infoLabels = ['Loan Start Date', 'Loan Amount', 'Term (in Months)', 'Interest Only', 'Interest Rate',
    'Annual Debt Service', 'Monthly Debt Service'];

// one loan per block, start = column index of its first cell
const loans = [
    { start: 1, name: 'Property Loan Information', inputDate: true, amount: '72,000', monthly: '300', cols: 7 },
    { start: 9, name: 'CapEx Loan Information', amount: '18,000', monthly: '75', cols: 7 },
    { start: 17, name: 'Other Loan Information', amount: '', monthly: '', cols: 1 }
];

function money(value) {
    return `<div class="${value === '-' ? 'dash' : ''}"><span>$</span><span>${value}</span></div>`;
}

function infoCell(loan, row, col) {
    let cls = 'info';
    if (col === 0) cls += ' first';
    if (col === 2) cls += ' last';
    if (row === 9) cls += ' bottom';
    if (col === 0) return `<td class="${cls}">${infoLabels[row - 3]}</td>`;
    if (col === 1) return `<td class="${cls}"></td>`;
    const values = ['January-23', loan.amount, '12 Months', 'Yes', '5.00%', '0', loan.monthly];
    const value = values[row - 3];
    if (row === 4 || row >= 8) return `<td class="${cls} money">${money(value)}</td>`;
    if (row === 3 && loan.inputDate) cls += ' input';
    return `<td class="${cls} num">${value}</td>`;
}

function tableCell(loan, row, col) {
    const n = row - 13;
    const active = n < months.length;
    if (loan.cols === 1) return `<td>${n === 0 ? months[0] : ''}</td>`;
    if (col === 0) return `<td>${active ? months[n] : ''}</td>`;
    if (col === 1) return `<td class="center">${active ? n + 1 : ''}</td>`;
    const values = [loan.amount + '.00', loan.monthly + '.00', loan.monthly + '.00', '-', loan.amount + '.00'];
    return `<td class="money">${money(active ? values[col - 2] : '-')}</td>`;
}

function cell(row, c) {
    const loan = loans.find(l => c >= l.start && c < l.start + l.cols);
    if (!loan) return '<td></td>';
    const col = c - loan.start;
    if (row === 2 && col === 0) {
        const span = loan.cols === 1 ? 1 : 3;
        return `<th class="head title first ${span === 3 ? 'last' : ''}" colspan="${span}">${loan.name}</th>`;
    }
    if (row === 2 && col < 3) return '';
    if (row >= 3 && row <= 9 && col < 3) return infoCell(loan, row, col);
    if (row === 12) {
        const edge = col === 0 ? 'first' : col === 6 ? 'last' : '';
        return `<th class="head ${edge}">${headings[col]}</th>`;
    }
    if (row >= 13) return tableCell(loan, row, col);
    return '<td></td>';
}

let html = '<colgroup>' + widths.map(w => `<col style="width:${w}px">`).join('') + '</colgroup>';
html += '<thead><tr><th class="corner"><i></i></th>';
for (let c = 0; c < 18; c++) {
    html += `<th>${String.fromCharCode(65 + c)}</th>`;
}
html += '</tr></thead><tbody>';
for (let row = 1; row <= 31; row++) {
    html += `<tr><th class="row">${row}</th>`;
    for (let c = 0; c < 18; c++) {
        html += cell(row, c);
    }
    html += '</tr>';
}
document.getElementById('grid').innerHTML = html + '</tbody>';
```
